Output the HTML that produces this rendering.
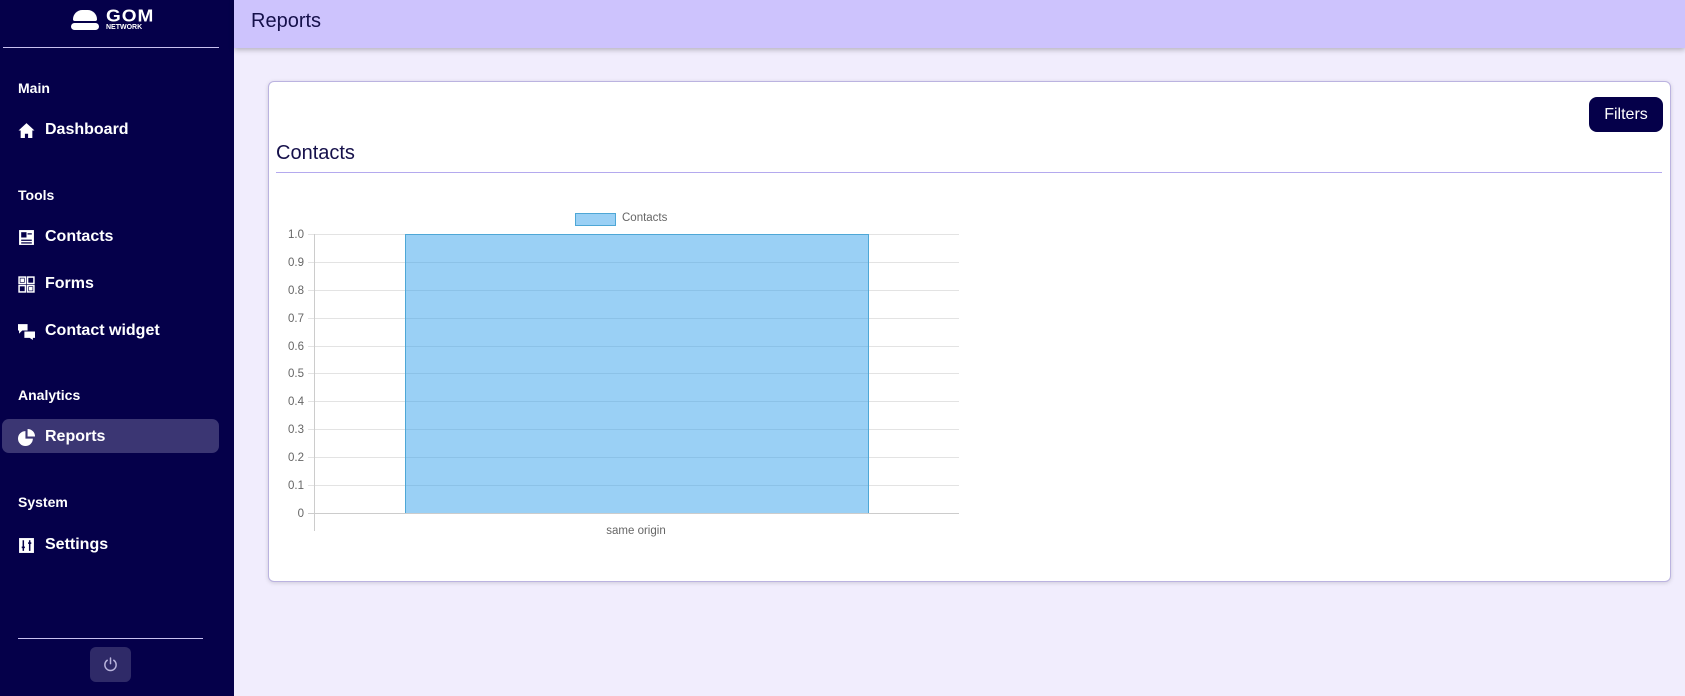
<!DOCTYPE html>
<html><head><meta charset="utf-8"><style>
*{margin:0;padding:0;box-sizing:border-box}
body{width:1685px;height:696px;background:#f1edfd;font-family:"Liberation Sans",sans-serif;position:relative;overflow:hidden}
.sb{position:absolute;left:0;top:0;width:234px;height:696px;background:#05004a;color:#fff}
.a{position:absolute}
.sec{position:absolute;left:18px;font-size:14px;font-weight:bold}
.it{position:absolute;left:18px;font-size:16px;font-weight:bold;display:flex;align-items:center;gap:10px}
.it svg{width:17px;height:17px}
.hd{position:absolute;left:234px;top:0;right:0;height:48px;background:#cdc3fd;box-shadow:0 2px 5px rgba(0,0,0,.25)}
.card{position:absolute;left:268px;top:81px;width:1403px;height:501px;background:#fff;border:1px solid #bbb3e0;border-radius:6px;box-shadow:0 1px 4px rgba(0,0,0,.15)}
.gl{position:absolute;left:308px;width:651px;height:1px;background:#e3e3e3}
.yl{position:absolute;width:30px;text-align:right;left:274px;font-size:11.5px;color:#666}
</style></head><body>
<div class="sb">
 <div class="a" style="left:71px;top:10px;width:28px;height:20px">
  <div class="a" style="left:2px;top:0;width:24px;height:11px;background:#fff;border-radius:11px 11px 2px 2px"></div>
  <div class="a" style="left:0;top:13px;width:28px;height:7px;background:#fff;border-radius:4px"></div>
 </div>
 <div class="a" style="left:106px;top:6px;font-size:19px;font-weight:900;letter-spacing:1px;transform:scaleY(0.9)">GOM</div>
 <div class="a" style="left:106px;top:24px;font-size:7px;font-weight:bold">NETWORK</div>
 <div class="a" style="left:3px;top:47px;width:216px;height:1px;background:#c8c0f0"></div>
 <div class="sec" style="top:80px">Main</div>
 <div class="it" style="top:121px"><svg viewBox="0 0 16 16"><path d="M8 1L0.5 8h2v7h4v-4h3v4h4V8h2z" fill="#fff"/></svg>Dashboard</div>
 <div class="sec" style="top:187px">Tools</div>
 <div class="it" style="top:228px"><svg viewBox="0 0 16 16"><rect x="1" y="1" width="14" height="14" fill="#fff"/><rect x="3" y="3" width="5" height="5" fill="#05004a"/><rect x="9" y="4" width="4" height="1.2" fill="#05004a"/><rect x="3" y="10" width="10" height="1.2" fill="#05004a"/><rect x="3" y="12.5" width="10" height="1.2" fill="#05004a"/></svg>Contacts</div>
 <div class="it" style="top:275px"><svg viewBox="0 0 16 16" fill="none" stroke="#fff" stroke-width="1.4"><rect x="1" y="1" width="6" height="6"/><rect x="9" y="1" width="6" height="6"/><rect x="1" y="9" width="6" height="6"/><rect x="9" y="9" width="6" height="6"/><rect x="3" y="3" width="2" height="2" fill="#fff"/><rect x="11" y="11" width="2" height="2" fill="#fff"/></svg>Forms</div>
 <div class="it" style="top:322px"><svg viewBox="0 0 16 16"><path d="M0 1h9v6H4l-3 3V7H0z" fill="#fff"/><path d="M6 8h10v6h-2v2l-3-2H6z" fill="#fff"/></svg>Contact widget</div>
 <div class="sec" style="top:387px">Analytics</div>
 <div class="a" style="left:2px;top:419px;width:217px;height:34px;background:#3b3673;border-radius:7px"></div>
 <div class="it" style="top:428px"><svg viewBox="0 0 16 16"><path d="M7 2A7 7 0 1 0 14 9H7z" fill="#fff"/><path d="M9 0v7h7A7 7 0 0 0 9 0z" fill="#fff"/></svg>Reports</div>
 <div class="sec" style="top:494px">System</div>
 <div class="it" style="top:536px"><svg viewBox="0 0 16 16"><rect x="1" y="1" width="14" height="14" fill="#fff"/><path d="M5 3v10M11 3v10" stroke="#05004a" stroke-width="1.4"/><rect x="3.5" y="9" width="3" height="1.5" fill="#05004a"/><rect x="9.5" y="5" width="3" height="1.5" fill="#05004a"/></svg>Settings</div>
 <div class="a" style="left:18px;top:638px;width:185px;height:1px;background:#c8c0f0"></div>
 <div class="a" style="left:90px;top:647px;width:41px;height:35px;background:#2f2a68;border-radius:6px">
  <svg style="position:absolute;left:13px;top:10px" width="15" height="15" viewBox="0 0 16 16" fill="none" stroke="#b9b4dc" stroke-width="1.6" stroke-linecap="round"><path d="M8 1v6"/><path d="M4.5 3.5a6 6 0 1 0 7 0"/></svg>
 </div>
</div>
<div class="hd"><div class="a" style="left:17px;top:10px;font-size:20px;color:#15104a">Reports</div></div>
<div class="card">
 <div class="a" style="left:1320px;top:15px;width:74px;height:35px;background:#05004a;border-radius:8px;color:#fff;font-size:16px;text-align:center;line-height:35px">Filters</div>
 <div class="a" style="left:7px;top:60px;font-size:20px;color:#15104a">Contacts</div>
 <div class="a" style="left:7px;top:90px;width:1386px;height:1px;background:#b4a9ee"></div>
</div>
<div class="gl" style="top:234px"></div><div class="gl" style="top:262px"></div><div class="gl" style="top:290px"></div><div class="gl" style="top:318px"></div><div class="gl" style="top:346px"></div><div class="gl" style="top:373px"></div><div class="gl" style="top:401px"></div><div class="gl" style="top:429px"></div><div class="gl" style="top:457px"></div><div class="gl" style="top:485px"></div><div class="gl" style="top:513px;background:#ccc"></div>
<div class="a" style="left:314px;top:234px;width:1px;height:297px;background:#ccc"></div>
<div class="yl" style="top:229px">1.0</div><div class="yl" style="top:257px">0.9</div><div class="yl" style="top:285px">0.8</div><div class="yl" style="top:313px">0.7</div><div class="yl" style="top:341px">0.6</div><div class="yl" style="top:368px">0.5</div><div class="yl" style="top:396px">0.4</div><div class="yl" style="top:424px">0.3</div><div class="yl" style="top:452px">0.2</div><div class="yl" style="top:480px">0.1</div><div class="yl" style="top:508px">0</div>
<div class="a" style="left:405px;top:234px;width:464px;height:279px;background:rgba(54,162,235,0.5);border:1px solid #4ea7d6;border-bottom:none"></div>
<div class="a" style="left:575px;top:213px;width:41px;height:13px;background:rgba(54,162,235,0.5);border:1px solid #4ea7d6"></div>
<div class="a" style="left:622px;top:212px;font-size:11.5px;color:#666">Contacts</div>
<div class="a" style="left:596px;top:525px;width:80px;text-align:center;font-size:11.5px;color:#666">same origin</div>
</body></html>
